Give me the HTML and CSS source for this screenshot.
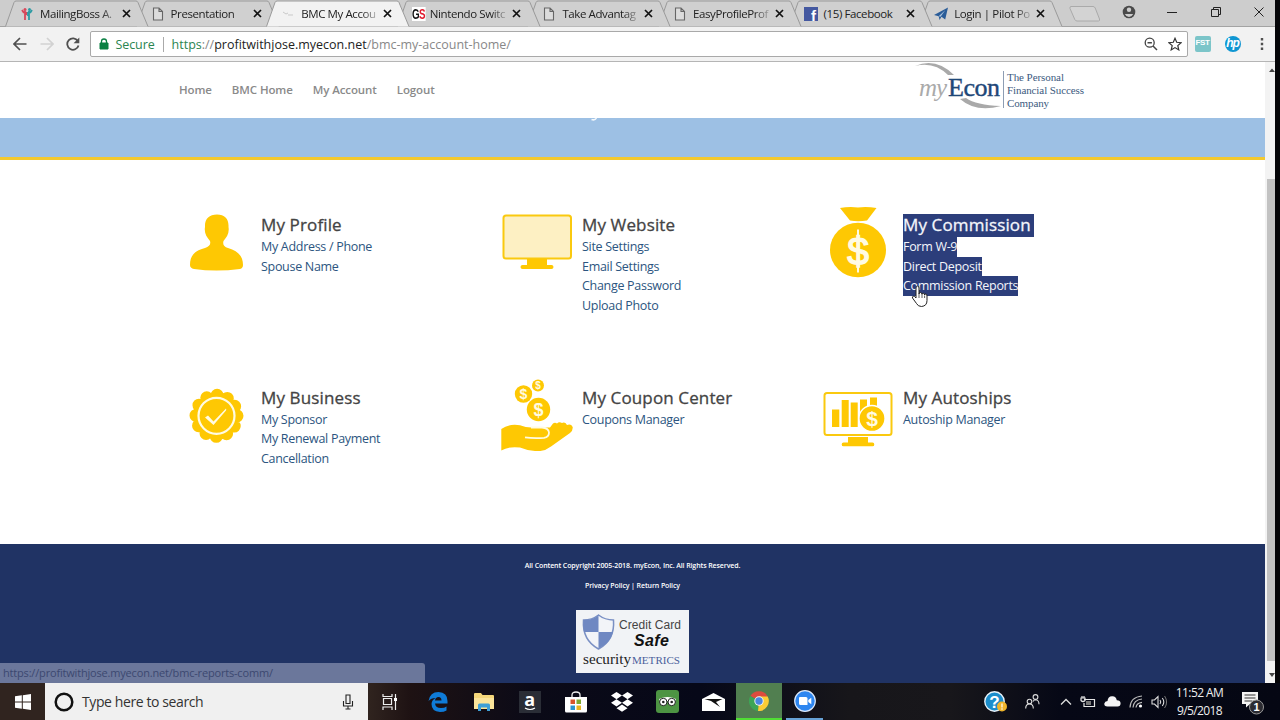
FILE: index.html
```
<!DOCTYPE html>
<html lang="en">

<head>
    <meta charset="UTF-8">
    <meta name="viewport" content="width=device-width, initial-scale=1.0">
    <title>BMC My Account</title>
    <link rel="stylesheet" href="styles.css">
</head>

<body>
    <svg class="defs" width="0" height="0">
        <symbol id="tabShape" viewBox="0 0 144 27">
            <path d="M0.5 26.5L9 2.5Q9.6 1 11 1H131Q132.400 1 133 2.500L143 26.500" stroke="#9a9a9a" />
        </symbol>
        <symbol id="closeX" viewBox="0 0 9 9">
            <path d="M1 1l7 7M8 1l-7 7" stroke="#111" stroke-width="1.7" />
        </symbol>
        <symbol id="pageIcon" viewBox="0 0 12 14">
            <path d="M1.500 1h5.500l3.500 3.500v8.500h-9zM7 1v3.500h3.500" fill="#dcdcdc" stroke="#666" stroke-width="1.100" />
        </symbol>
    </svg>

    <div class="browser">
        <div class="tabs">
            <div class="tab" style="z-index: 8">
                <svg class="shape"><use href="#tabShape" /></svg>
                <div class="tabBody">
                    <svg class="fav" viewBox="0 0 12 14"><path d="M4 4v9M3 6L1 3M6 5L5 8" stroke="#d8475a" stroke-width="1.800" /><circle cx="4" cy="2.500" r="1.500" fill="#d8475a" /><path d="M8 4v9M9 6l2-3M7 5v4" stroke="#2c9ba4" stroke-width="1.800" /><circle cx="8.500" cy="2.500" r="1.500" fill="#2c9ba4" /></svg>
                    <span>MailingBoss A.</span>
                    <svg class="x"><use href="#closeX" /></svg>
                </div>
            </div>
            <div class="tab" style="z-index: 7">
                <svg class="shape"><use href="#tabShape" /></svg>
                <div class="tabBody">
                    <svg class="fav"><use href="#pageIcon" /></svg>
                    <span>Presentation</span>
                    <svg class="x"><use href="#closeX" /></svg>
                </div>
            </div>
            <div class="tab active" style="z-index: 9">
                <svg class="shape"><use href="#tabShape" /></svg>
                <div class="tabBody">
                    <svg class="fav" viewBox="0 0 12 14"><path d="M1 5l3 2M6 8h5M4 7l2-1" stroke="#c9c9c9" /></svg>
                    <span>BMC My Accou</span>
                    <svg class="x"><use href="#closeX" /></svg>
                </div>
            </div>
            <div class="tab" style="z-index: 6">
                <svg class="shape"><use href="#tabShape" /></svg>
                <div class="tabBody">
                    <b class="fav gs">G<i>S</i></b>
                    <span>Nintendo Switc</span>
                    <svg class="x"><use href="#closeX" /></svg>
                </div>
            </div>
            <div class="tab" style="z-index: 5">
                <svg class="shape"><use href="#tabShape" /></svg>
                <div class="tabBody">
                    <svg class="fav"><use href="#pageIcon" /></svg>
                    <span>Take Advantag</span>
                    <svg class="x"><use href="#closeX" /></svg>
                </div>
            </div>
            <div class="tab" style="z-index: 4">
                <svg class="shape"><use href="#tabShape" /></svg>
                <div class="tabBody">
                    <svg class="fav"><use href="#pageIcon" /></svg>
                    <span>EasyProfileProf</span>
                    <svg class="x"><use href="#closeX" /></svg>
                </div>
            </div>
            <div class="tab" style="z-index: 3">
                <svg class="shape"><use href="#tabShape" /></svg>
                <div class="tabBody">
                    <b class="fav fb">f</b>
                    <span class="full">(15) Facebook</span>
                    <svg class="x"><use href="#closeX" /></svg>
                </div>
            </div>
            <div class="tab" style="z-index: 2">
                <svg class="shape"><use href="#tabShape" /></svg>
                <div class="tabBody">
                    <svg class="fav plane" viewBox="0 0 15 14"><path d="M0 8L15 0L12 13L8 10L6 13.500L5 9.500z" fill="#2a5c98" /><path d="M5 9.500L12 3L7 10z" fill="#a9c3de" /></svg>
                    <span>Login | Pilot Po</span>
                    <svg class="x"><use href="#closeX" /></svg>
                </div>
            </div>
            <svg class="newTab" width="34" height="18" viewBox="0 0 34 18"><path d="M3 1.500h22q1.500 0 2.200 1.500l4.300 11q.5 2-1 2H9q-1.500 0-2.200-1.500L2 3.500q-.5-2 1-2z" fill="#d3d3d3" stroke="#aaa" /></svg>
            <div class="winButtons">
                <svg width="14" height="14" viewBox="0 0 14 14"><circle cx="7" cy="7" r="6.300" fill="#4a4a4a" /><circle cx="7" cy="4.800" r="2.200" fill="#cdcdcd" /><path d="M2.800 9h8.400q-1.500 3-4.200 3t-4.200-3z" fill="#cdcdcd" /></svg>
                <svg width="14" height="14" viewBox="0 0 14 14"><path d="M2 7.500h10" stroke="#222" /></svg>
                <svg width="14" height="14" viewBox="0 0 14 14"><path d="M2.500 4.500h7v7h-7zM4.500 4.500v-2h7v7h-2" stroke="#222" /></svg>
                <svg width="14" height="14" viewBox="0 0 14 14"><path d="M2.500 2.500l9 9M11.500 2.500l-9 9" stroke="#222" /></svg>
            </div>
        </div>

        <div class="toolbar">
            <svg width="14" height="14" viewBox="0 0 14 14"><path d="M13.500 7H1.500M7 1L1 7l6 6" stroke="#505050" stroke-width="1.700" /></svg>
            <svg width="14" height="14" viewBox="0 0 14 14"><path d="M.5 7h12M7 1l6 6-6 6" stroke="#d2d2d2" stroke-width="1.700" /></svg>
            <svg width="14" height="14" viewBox="0 0 14 14"><path d="M11.800 4A5.700 5.700 0 1 0 12.500 8.500" stroke="#505050" stroke-width="1.800" /><path d="M13.300 .5v5.700H7.600z" fill="#505050" /></svg>
            <div class="omnibox">
                <svg width="10" height="12" viewBox="0 0 10 12"><path d="M1 5h8v6H1z" fill="#0b8043" stroke="#0b8043" /><path d="M2.500 5V3.500a2.500 2.500 0 0 1 5 0V5" stroke="#0b8043" stroke-width="1.300" /></svg>
                <span class="secure">Secure</span>
                <span class="url"><em>https</em>://<b>profitwithjose.myecon.net</b>/bmc-my-account-home/</span>
                <svg width="14" height="14" viewBox="0 0 14 14"><circle cx="5.700" cy="5.700" r="4.500" stroke="#444" stroke-width="1.300" /><path d="M3.500 5.700h4.400M9 9l4 4" stroke="#444" stroke-width="1.500" /></svg>
                <svg class="star" width="14" height="14" viewBox="0 0 14 14"><path d="M7 1.300l1.700 4 4.400.4-3.300 2.900 1 4.300L7 10.600l-3.800 2.300 1-4.300L.9 5.700l4.400-.4z" stroke="#333" stroke-width="1.200" /></svg>
            </div>
            <span class="ext fst">FST</span>
            <span class="ext hp">hp</span>
            <svg class="dots" width="4" height="14" viewBox="0 0 4 14"><path d="M.8 1h2.400v2.400H.8zM.8 5.800h2.400v2.400H.8zM.8 10.600h2.400V13H.8z" fill="#505050" /></svg>
        </div>

        <div class="viewport">
            <div class="page">
                <header>
                    <nav>
                        <a>Home</a>
                        <a>BMC Home</a>
                        <a>My Account</a>
                        <a>Logout</a>
                    </nav>
                    <svg class="logo" width="172" height="50" viewBox="0 0 172 50">
                        <path d="M1 4Q22-5 40 13L34 13Q20-1 1 4z" fill="#a9a9a9" />
                        <path d="M46 37Q62 51 87 44Q62 43 52 36z" fill="#a9a9a9" />
                        <text class="serif my" x="5" y="34" textLength="28">my</text>
                        <text class="serif econ" x="34" y="34" textLength="52">Econ</text>
                        <path d="M89.500 9v37" stroke="#8d9db3" />
                        <text class="serif tag" x="93" y="19" textLength="57">The Personal</text>
                        <text class="serif tag" x="93" y="32" textLength="77">Financial Success</text>
                        <text class="serif tag" x="93" y="45" textLength="42">Company</text>
                    </svg>
                </header>
                <div class="band">
                    <svg width="14" height="4" viewBox="0 0 14 4"><path d="M3.500 1.500Q7 2.700 8.500 0" stroke="#f4f8fc" stroke-width="1.500" /></svg>
                </div>

                <main>
                    <section>
                        <svg class="icon" viewBox="0 0 72 72"><path class="y" d="M37 8.500C29 8.500 24.500 13 25 21C24 27 26.500 31 30 35Q31.500 40 25 42C14 45 10 50 10 59Q10 62 14 63Q36 66 60 63Q63 62 63 59C63 50 58 45 48 42Q42 40 43.500 35C47 31 49.500 27 48.500 21C49 13 45 8.500 37 8.500z" /></svg>
                        <div>
                            <h2>My Profile</h2>
                            <a>My Address / Phone</a>
                            <a>Spouse Name</a>
                        </div>
                    </section>
                    <section>
                        <svg class="icon" viewBox="0 0 72 72"><rect x="2.500" y="9.500" width="67.500" height="43" rx="2.500" fill="#fdf0c3" stroke="#fac90f" stroke-width="2" /><path class="y" d="M26 53h20v6h4.500q2 0 2 2t-2 2h-29q-2 0-2-2t2-2H26z" /></svg>
                        <div>
                            <h2>My Website</h2>
                            <a>Site Settings</a>
                            <a>Email Settings</a>
                            <a>Change Password</a>
                            <a>Upload Photo</a>
                        </div>
                    </section>
                    <section class="selected">
                        <svg class="icon" viewBox="0 0 72 72"><path class="y" d="M18 2Q27 .5 36 1.500Q45 .5 54.500 2L45 14.500Q36 16 28 14.500z" /><ellipse class="y" cx="36" cy="44" rx="28" ry="27.300" /><text class="dollar big" x="36" y="58.500" font-size="39">$</text><path d="M36 23.500v43" stroke="#fffbe3" stroke-width="2" /></svg>
                        <div>
                            <h2>My Commission</h2>
                            <a>Form W-9</a>
                            <a>Direct Deposit</a>
                            <a>Commission Reports</a>
                        </div>
                    </section>
                    <section>
                        <svg class="icon" viewBox="0 0 72 72">
                            <circle class="y" cx="36.500" cy="36.800" r="22" />
                            <!-- round dashes make the scalloped edge -->
                            <circle cx="36.500" cy="36.800" r="20.500" stroke="#fec803" stroke-width="13" stroke-linecap="round" stroke-dasharray="0 10.734" />
                            <circle cx="36.500" cy="36.800" r="18" stroke="#fffbe3" stroke-width="2.200" />
                            <path d="M25 38.500l3-2 5.500 6 12.500-13q.5 1 0 2L33.500 46z" fill="#fffbe3" />
                        </svg>
                        <div>
                            <h2>My Business</h2>
                            <a>My Sponsor</a>
                            <a>My Renewal Payment</a>
                            <a>Cancellation</a>
                        </div>
                    </section>
                    <section>
                        <svg class="icon" viewBox="0 0 72 72">
                            <circle class="y" cx="22.500" cy="15" r="8.700" /><text class="dollar" x="22.500" y="20" font-size="14">$</text>
                            <circle class="y" cx="37" cy="6.500" r="6" /><text class="dollar" x="37" y="10" font-size="10">$</text>
                            <circle class="y" cx="37.500" cy="30.500" r="11.700" /><text class="dollar" x="37.500" y="37" font-size="18">$</text>
                            <path class="y" d="M.3 50Q8 44.500 19 46.300Q25 48.500 30 48.500H49L52 44.500Q54 43 56 44.500Q58 42.500 61 44Q64 42.500 66 46Q70 44.500 71.700 48Q72 51.500 69 54L50 67.500Q43 73 34 72Q26 71.500 19 68.500Q8 67 .3 71.500z" />
                            <path d="M24 58.300Q32 59.500 43 58.800Q48 58 48 53.500Q47.500 49 41 48.500L30 48.500" stroke="#fffbe3" stroke-width="1.800" />
                        </svg>
                        <div>
                            <h2>My Coupon Center</h2>
                            <a>Coupons Manager</a>
                        </div>
                    </section>
                    <section>
                        <svg class="icon" viewBox="0 0 72 72">
                            <rect x="2.500" y="14" width="67" height="42" rx="2.500" stroke="#fac90f" stroke-width="2" />
                            <path class="y" d="M26 58h20v5.500h4.500q1.800 0 1.800 1.900t-1.800 1.900h-29q-1.800 0-1.800-1.900t1.800-1.900H26z" />
                            <path class="y" d="M10 30.500h7.300V48H10zM19.700 21h7v27h-7zM28.700 23.500h7V48h-7zM38 20.500h7V40h-7zM48 18.500h7V30h-7z" />
                            <circle class="y" cx="50" cy="39.500" r="13" stroke="#fff" stroke-width="1.300" /><text class="dollar" x="50" y="47" font-size="21">$</text>
                        </svg>
                        <div>
                            <h2>My Autoships</h2>
                            <a>Autoship Manager</a>
                        </div>
                    </section>
                </main>

                <footer>
                    <p>All Content Copyright 2005-2018. myEcon, Inc. All Rights Reserved.</p>
                    <p>Privacy Policy | Return Policy</p>
                    <svg class="safe" width="113" height="63" viewBox="0 0 113 63">
                        <path d="M22.500 5Q29 10 37.500 10Q39 30 22.500 39Q6 30 7.500 10Q16 10 22.500 5z" fill="#f2f4f8" stroke="#7a90c4" stroke-width="1.500" />
                        <path d="M22.500 5.500V22H8Q6.500 16 7.500 10Q16 10 22.500 5.500zM22.500 22H37Q34.500 33 22.500 38.500z" fill="#6f88c2" />
                        <text class="sans" x="43" y="19" font-size="12" textLength="62">Credit Card</text>
                        <text class="sans bold" x="58" y="36" font-size="16" textLength="35">Safe</text>
                        <text class="serif" x="7" y="54" font-size="15" fill="#222" textLength="48" lengthAdjust="spacingAndGlyphs">security</text>
                        <text class="serif" x="56" y="54" font-size="10" fill="#4a5f9c" textLength="48" lengthAdjust="spacingAndGlyphs">METRICS</text>
                    </svg>
                </footer>
                <div class="status">https://profitwithjose.myecon.net/bmc-reports-comm/</div>
                <svg class="cursor" width="18" height="23" viewBox="0 0 18 23"><path d="M5 13V3Q5 1 6.500 1T8 3v6q0-1.500 1.500-1.500T11 9.500q0-1.200 1.300-1.200t1.300 1.700q0-1 1.200-1T16 11v4.500Q16 21 10.500 21.500Q7 21.500 5.500 18.500L1.500 13Q1 11.500 2.200 11.200T5 13z" fill="#fff" stroke="#222" /><path d="M8 9v4M11 10v3M13.600 10.500V13" stroke="#333" stroke-width=".8" /></svg>
            </div>
            <div class="scrollbar">
                <svg width="10" height="8" viewBox="0 0 10 8"><path d="M4 6L7 2.500L10 6z" fill="#444" /></svg>
                <div class="thumb"></div>
                <svg width="10" height="8" viewBox="0 0 10 8"><path d="M4 2h6L7 6z" fill="#444" /></svg>
            </div>
        </div>
    </div>

    <div class="taskbar">
        <div class="start"><svg width="16" height="16" viewBox="0 0 16 16"><path d="M0 2.300L6.800 1.300V7.500H0zM7.800 1.200L16 0v7.500H7.800zM0 8.500h6.800v6.200L0 13.700zM7.800 8.500H16V16l-8.200-1.200z" fill="#fff" /></svg></div>
        <div class="search">
            <svg width="20" height="20" viewBox="0 0 20 20"><circle cx="10" cy="10" r="8.300" stroke="#111" stroke-width="2.500" /></svg>
            <span>Type here to search</span>
            <svg width="12" height="16" viewBox="0 0 12 16"><path d="M4 1h4v8.500H4zM1.500 7v5h9V7M6 12v3M3.500 15h5" stroke="#222" stroke-width="1.100" /></svg>
        </div>
        <div class="app first"><svg width="16" height="16" viewBox="0 0 16 16"><path d="M1 0v2.500h9V0M1.500 4.500h8v6h-8zM1 16v-3h9v3M13.500 0v16" stroke="#eee" stroke-width="1.200" /><path d="M12 4h3v3h-3z" fill="#fff" /></svg></div>
        <div class="app"><svg width="20" height="20" viewBox="0 0 20 20"><path d="M.5 9Q2 0 10.500 0Q19.500 .5 19.500 9v2.500H7q.5 4.500 6 4.500 3.500 0 5.500-1.500v4Q16 20 12 20 3.500 19.500 3.500 12q.2-4 4-6Q3 6 .5 9zM7 8.500h6.500Q13.500 5 10.500 5 7.500 5.200 7 8.500z" fill="#0f7bd7" fill-rule="evenodd" /></svg></div>
        <div class="app"><svg width="20" height="18" viewBox="0 0 20 18"><path d="M0 1q0-1 1-1h6l1.500 2H19q1 0 1 1v13H0z" fill="#f5d77a" /><path d="M0 5h20v11H0z" fill="#fbe49a" /><path d="M4 18v-6q0-1.500 1.500-1.500h9Q16 10.500 16 12v6h-3v-3.500H7V18z" fill="#3f9fd6" /></svg></div>
        <div class="app"><b class="amazon">a<svg width="12" height="4" viewBox="0 0 12 4"><path d="M1 1q5 3 10 0" stroke="#fff" stroke-width="1.200" /></svg></b></div>
        <div class="app"><svg width="22" height="22" viewBox="0 0 22 22"><path d="M7 7V4q0-3 4-3t4 3v3" stroke="#eee" stroke-width="1.300" /><path d="M0 6h22v14q0 1.500-1.500 1.500h-19Q0 21.500 0 20z" fill="#fff" /><path d="M5.500 8.500H10V13H5.500z" fill="#d9532c" /><path d="M11.500 8.500H16V13h-4.500z" fill="#7fa832" /><path d="M5.500 14.500H10V19H5.500z" fill="#2c94d0" /><path d="M11.500 14.500H16V19h-4.500z" fill="#eab41f" /></svg></div>
        <div class="app"><svg width="22" height="20" viewBox="0 0 22 20"><path d="M5.500 0L11 3.600 5.500 7.200 0 3.600zM16.500 0L22 3.600 16.500 7.200 11 3.600zM5.500 7.200l5.500 3.600-5.500 3.600L0 10.800zM16.500 7.200l5.500 3.600-5.500 3.600-5.500-3.600zM11 12.500l5.500 3.700L11 19.800l-5.500-3.600z" fill="#fff" /></svg></div>
        <div class="app"><svg width="23" height="23" viewBox="0 0 23 23"><rect width="23" height="23" rx="3" fill="#4d9443" /><path d="M3 9q8.500-4 17 0l-1 2H4z" fill="#fff" /><circle cx="7.300" cy="12" r="3.700" fill="#fff" stroke="#222" /><circle cx="15.700" cy="12" r="3.700" fill="#fff" stroke="#222" /><circle cx="7.300" cy="12" r="1.300" fill="#222" /><circle cx="15.700" cy="12" r="1.300" fill="#222" /></svg></div>
        <div class="app"><svg width="23" height="18" viewBox="0 0 23 18"><path d="M0 6l11.500-6L23 6v12H0z" fill="#fff" /><path d="M2.500 6h18L14 9l4 5-9-6z" fill="#111" /></svg></div>
        <div class="app chrome"><svg width="20" height="20" viewBox="0 0 20 20"><path d="M10 10L1.300 5A10 10 0 0 1 18.700 5.500z" fill="#dd4b3e" /><path d="M10 10L1.300 5A10 10 0 0 0 9 20z" fill="#3da556" /><path d="M10 10L9 20A10 10 0 0 0 18.700 5.500H10z" fill="#fbcd35" /><circle cx="10" cy="10" r="4.700" fill="#f2f2f2" /><circle cx="10" cy="10" r="3.700" fill="#4a86e0" /></svg></div>
        <div class="app zoom"><svg width="22" height="22" viewBox="0 0 22 22"><circle cx="11" cy="11" r="10.300" fill="#2d86f0" stroke="#dbe9fb" stroke-width="1.200" /><path d="M5 8q0-1 1-1h6q1.500 0 1.500 1.500V15H6.500Q5 15 5 13.500zM14.300 10l3-2.300v6.600l-3-2.300z" fill="#fff" /></svg></div>
        <div class="tray">
            <svg width="24" height="21" viewBox="0 0 24 21"><circle cx="10.500" cy="10.500" r="9.700" fill="#1b8dcb" stroke="#e6f2fa" stroke-width="1.400" /><text class="sans q" x="10.500" y="16.500" font-size="17">?</text><circle cx="18" cy="15.500" r="5" fill="#efb52b" /><path d="M18 12.500v4M18 17.300v1.400" stroke="#fff" stroke-width="1.200" /></svg>
            <svg width="15" height="15" viewBox="0 0 15 15"><circle cx="10.500" cy="3" r="2.400" stroke="#ddd" stroke-width="1.100" /><circle cx="4.500" cy="7.500" r="2.300" stroke="#ddd" stroke-width="1.100" /><path d="M.7 14.500q0-4.500 3.800-4.500t3.800 4.500M8 7.500q1-1.700 2.500-1.700 3.500.2 3.500 4.500" stroke="#ddd" stroke-width="1.100" /></svg>
            <svg width="12" height="8" viewBox="0 0 12 8"><path d="M1 6.500l5-5 5 5" stroke="#ddd" stroke-width="1.300" /></svg>
            <svg width="16" height="12" viewBox="0 0 16 12"><path d="M4 3.500h10.500v7H4V7M1 2h4v2.500q-2 2-4 0zM2 0v2M4 0v2" stroke="#e6e6e6" stroke-width="1.200" /><path d="M6 5h5v4H6z" fill="#777" /></svg>
            <svg width="17" height="11" viewBox="0 0 17 11"><path d="M3.500 10.500Q0 10.500 .3 7.500 .8 5 3.500 5 4 0 8.500 .3 12 .5 12.800 4.200 16.500 4.200 16.600 7.300 16.500 10.500 13.500 10.500z" fill="#f4f4f4" /></svg>
            <svg width="14" height="13" viewBox="0 0 14 13"><path d="M1 12.500Q1.500 2 13 1M4 12.500Q4.500 5 13 4M7 12.500Q7.500 8 13 7.300" stroke="#bbb" stroke-width="1.200" /><circle cx="11.500" cy="11" r="1.600" fill="#fff" /></svg>
            <svg width="17" height="14" viewBox="0 0 17 14"><path d="M1 5h2.500L7 1.500v11L3.500 9H1z" stroke="#ddd" stroke-width="1.100" /><path d="M9 5q1.500 2 0 4M11.300 3q3 4 0 8" stroke="#ddd" stroke-width="1.100" /><path d="M13.600 1q4 6 0 12" stroke="#777" /></svg>
        </div>
        <div class="clock">11:52 AM<br>9/5/2018</div>
        <svg class="notice" width="24" height="24" viewBox="0 0 24 24"><path d="M1 1h16v12H9l-4 3.500V13H1z" fill="#f4f4f4" /><path d="M3.500 4h11M3.500 7h11M3.500 10h8" stroke="#333" /><circle cx="15.500" cy="16" r="7" fill="#2b2b31" stroke="#999" /><text class="sans n" x="15.500" y="20" font-size="11">1</text></svg>
    </div>
</body>

</html>
```
FILE: styles.css
```
* {
    box-sizing: border-box;
}

body {
    margin: 0;
    width: 1280px;
    height: 720px;
    overflow: hidden;
    background-color: #050508;
    font-family: "Open Sans", sans-serif;
}

svg {
    display: block;
    flex: none;
    fill: none;
}

.defs {
    position: absolute;
}

.browser {
    width: 1275px;
    height: 683px;
    display: flex;
    flex-direction: column;
}

/* tab strip */
.tabs {
    height: 27px;
    flex: none;
    display: flex;
    padding-left: 5px;
    background-color: #cdcdcd;
    border-bottom: 1px solid #a3a3a3;
}

.tab {
    display: grid;
    width: 130.6px;
    height: 27px;
    position: relative;
    flex: none;
}

.shape {
    grid-area: 1 / 1;
    width: 144px;
    height: 27px;
    fill: #d0d0d0;
}

.active .shape {
    fill: #f2f2f2;
}

.tabBody {
    grid-area: 1 / 1;
    display: flex;
    align-items: center;
    width: 132px;
    height: 27px;
    padding-left: 15px;
    font-size: 11.5px;
    letter-spacing: -0.4px;
    color: #222;
}

.tabBody span {
    width: 78px;
    margin-left: 6px;
    white-space: nowrap;
    -webkit-mask-image: linear-gradient(to right, #000 78%, rgba(0, 0, 0, 0.25) 97%);
    mask-image: linear-gradient(to right, #000 78%, rgba(0, 0, 0, 0.25) 97%);
}

.tabBody .full {
    -webkit-mask-image: none;
    mask-image: none;
}

.fav {
    width: 14px;
    height: 14px;
    flex: none;
}

.gs {
    background-color: #fff;
    font: bold 15px/14px "Liberation Sans", sans-serif;
    letter-spacing: -1px;
    transform: scaleX(0.65);
    transform-origin: left;
    width: 21px;
    margin-right: -9px;
    color: #111;
}

.gs i {
    font-style: normal;
    color: #e01b2e;
}

.fb {
    background-color: #4458a0;
    color: #fff;
    font: bold 15px/17px "Liberation Sans", sans-serif;
    text-align: right;
    padding-right: 2px;
}

.x {
    width: 9px;
    height: 9px;
    margin-left: 4px;
}

.newTab {
    margin: 5px 0 0 18px;
}

.winButtons {
    display: flex;
    gap: 29.5px;
    margin: 5px 0 0 auto;
    padding-right: 9px;
}

/* address bar */
.toolbar {
    height: 35px;
    flex: none;
    display: flex;
    align-items: center;
    padding-left: 13px;
    background-color: #f2f2f2;
    border-bottom: 1px solid #b5b5b5;
}

.toolbar > svg {
    margin-right: 12.5px;
}

.omnibox {
    flex: none;
    display: flex;
    align-items: center;
    width: 1098px;
    height: 26px;
    margin-left: -3px;
    padding: 0 5px 0 8px;
    background-color: #fff;
    border: 1px solid #a9a9a9;
    border-radius: 2px;
    font-size: 12.5px;
}

.secure {
    margin-left: 7px;
    padding-right: 8px;
    border-right: 1px solid #aaa;
    line-height: 15px;
    letter-spacing: -0.1px;
    color: #2b8550;
}

.url {
    margin: 0 auto 0 8px;
    color: #888;
}

.url em {
    font-style: normal;
    color: #2b8550;
}

.url b {
    font-weight: normal;
    color: #222;
}

.star {
    margin-left: 10px;
}

.ext {
    flex: none;
    width: 16px;
    height: 16px;
    margin-left: 7px;
    text-align: center;
    color: #fff;
}

.fst {
    background-color: #7cc5c9;
    font: bold 8px/14px "Liberation Sans", sans-serif;
    letter-spacing: -0.3px;
    border-radius: 2px;
}

.hp {
    margin: 0 19px 0 14px;
    background-color: #0f96d2;
    border-radius: 50%;
    font: italic bold 12px/15px "Liberation Sans", sans-serif;
    letter-spacing: -1px;
}

/* web page */
.viewport {
    flex: 1;
    display: flex;
}

.page {
    width: 1265px;
    position: relative;
    display: flex;
    flex-direction: column;
    background-color: #fff;
}

header {
    height: 56px;
    flex: none;
    display: flex;
    justify-content: space-between;
    padding: 0 179px 0 179px;
}

nav {
    display: flex;
    gap: 20px;
    font-size: 11.5px;
    font-weight: 600;
    letter-spacing: -0.1px;
    line-height: 55px;
    color: #8a8a8a;
}

.serif {
    font-family: "Liberation Serif", serif;
}

.sans {
    font-family: "Liberation Sans", sans-serif;
    fill: #444;
}

.my {
    font-size: 25px;
    font-style: italic;
    fill: #aaa;
}

.econ {
    font-size: 26px;
    fill: #1f4878;
    stroke: #1f4878;
    stroke-width: 0.4px;
}

.tag {
    font-size: 11px;
    fill: #3c5a80;
}

.band {
    height: 42px;
    flex: none;
    padding-left: 588px;
    background-color: #9dc0e4;
    border-bottom: 3px solid #f3c92e;
}

main {
    flex: 1;
    display: grid;
    grid-template-columns: repeat(3, 321px);
    grid-template-rows: 172.5px 160px;
    align-content: start;
    padding: 46px 0 0 180px;
}

section {
    display: flex;
    gap: 9px;
}

.icon {
    width: 72px;
    height: 72px;
}

.y {
    fill: #fec803;
}

.dollar {
    font-family: "Liberation Sans", sans-serif;
    font-weight: bold;
    text-anchor: middle;
    fill: #fffbe3;
}

.big {
    font-weight: normal;
    stroke: #fffbe3;
    stroke-width: 1.4px;
}

section div {
    padding-top: 8px;
    display: flex;
    flex-direction: column;
    align-items: flex-start;
}

h2 {
    margin: 0;
    padding-bottom: 1px;
    font-size: 17px;
    font-weight: 500;
    letter-spacing: 0.13px;
    line-height: 22px;
    color: #444;
    -webkit-text-stroke: 0.3px;
}

section a {
    font-size: 12.5px;
    letter-spacing: -0.3px;
    line-height: 19.6px;
    color: #2c5580;
}

.selected h2,
.selected a {
    background-color: #2c3e7b;
    color: #f4f6fb;
}

.selected h2 {
    padding-right: 3px;
}

footer {
    height: 139px;
    flex: none;
    display: flex;
    flex-direction: column;
    align-items: center;
    padding-top: 12px;
    background-color: #203364;
    color: #fff;
    font-size: 7px;
    font-weight: 600;
    letter-spacing: -0.1px;
    line-height: 20px;
}

footer p {
    margin: 0;
}

.safe {
    margin-top: 14px;
    background-color: #f1f3f6;
    font-weight: normal;
    letter-spacing: 0;
}

.bold {
    font-weight: bold;
    font-style: italic;
    fill: #111;
}

.status {
    position: absolute;
    left: 0;
    bottom: 0;
    width: 425px;
    height: 20px;
    padding-left: 3px;
    background-color: #6b779b;
    border-top-right-radius: 3px;
    font-size: 11px;
    letter-spacing: -0.18px;
    line-height: 20px;
    color: #3c4870;
}

.cursor {
    position: absolute;
    left: 911px;
    top: 223px;
}

.scrollbar {
    width: 10px;
    display: flex;
    flex-direction: column;
    justify-content: space-between;
    padding: 4px 0;
    background-color: #f3f3f3;
}

.thumb {
    width: 8px;
    height: 482px;
    margin: 0 0 -95px 2px;
    background-color: #c2c2c2;
}

/* windows taskbar */
.taskbar {
    height: 37px;
    display: flex;
    align-items: center;
    background: linear-gradient(to right, #30241f 0, #30241f 368px, #1e1213 410px, #0b0a17 530px, #060818 700px, #17161a 850px, #18171b 950px, #060816 1060px, #050713 1280px);
}

.start {
    width: 45px;
    padding-left: 15px;
}

.search {
    width: 323px;
    height: 37px;
    display: flex;
    align-items: center;
    padding: 0 14px 0 9px;
    background-color: #f0f0f0;
    font-size: 14px;
    letter-spacing: -0.4px;
    color: #333;
}

.search span {
    flex: 1;
    margin-left: 8px;
}

.app {
    width: 45.9px;
    height: 37px;
    display: flex;
    align-items: center;
    justify-content: center;
}

.first {
    width: 47px;
    padding-right: 3px;
}

.amazon {
    display: flex;
    flex-direction: column;
    align-items: center;
    width: 22px;
    height: 22px;
    background-color: #2a2d36;
    color: #fff;
    font-size: 18px;
    line-height: 16px;
}

.chrome {
    background-color: #517f50;
    border-bottom: 2px solid #50dd34;
}

.zoom {
    width: 37px;
    margin-left: 4px;
    border-bottom: 2px solid #67a2d6;
}

.tray {
    display: flex;
    align-items: center;
    gap: 8px;
    margin-left: auto;
}

.tray svg:nth-child(-n+2) {
    margin-right: 12px;
}

.tray svg:first-child {
    margin-right: 9px;
}

.q,
.n {
    fill: #fff;
    font-weight: bold;
    text-anchor: middle;
}

.clock {
    width: 63px;
    font-size: 12px;
    line-height: 17.500px;
    letter-spacing: -0.6px;
    text-align: center;
    color: #eee;
}

.notice {
    margin: 3px 15px 0 10px;
}
```
